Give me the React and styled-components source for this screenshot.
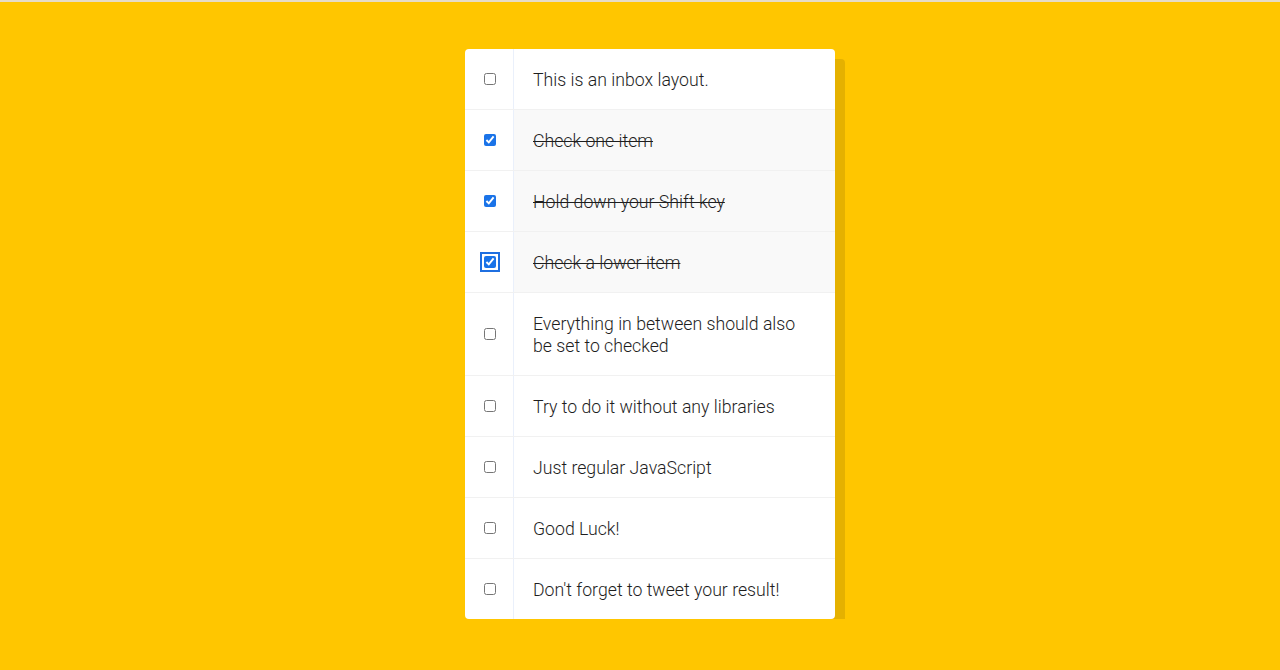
import React, { useState } from "react";
import styled, { createGlobalStyle, css } from "styled-components";

const GlobalStyle = createGlobalStyle`
  html {
    background: #ffc600;
  }
  body {
    margin: 0;
    font-family: Roboto, "Liberation Sans", sans-serif;
  }
`;

const TopRule = styled.div`
  height: 2px;
  background: #e6dcc8;
`;

const Page = styled.div`
  display: flex;
  justify-content: center;
  padding: 47px 0 0 20px;
`;

const Inbox = styled.div`
  width: 370px;
  background: white;
  border-radius: 4px;
  box-shadow: 10px 10px 0 rgba(0, 0, 0, 0.1);
  overflow: hidden;
`;

const Item = styled.label`
  display: flex;
  align-items: stretch;
  border-bottom: 1px solid #f1f1f1;
  &:last-child {
    border-bottom: 0;
  }
`;

const CheckCell = styled.div`
  width: 48px;
  display: flex;
  align-items: center;
  justify-content: center;
  flex-shrink: 0;
`;

const Checkbox = styled.input`
  width: 12px;
  height: 12px;
  margin: 0 0 0 1px;
  accent-color: #1a73e8;
  ${(p) =>
    p.$focused &&
    css`
      border-radius: 3px;
      box-shadow: 0 0 0 2px #ffffff, 0 0 0 4px #1f6fe0;
    `}
`;

const Text = styled.p`
  margin: 0;
  flex: 1;
  padding: 20px 18px 18px 19px;
  border-left: 1px solid #eaf0fb;
  font-family: Roboto, "Liberation Sans", sans-serif;
  font-size: 17.7px;
  font-weight: 300;
  line-height: 22px;
  color: #1e1e1e;
  ${(p) =>
    p.$checked &&
    css`
      background: #f9f9f9;
      text-decoration: line-through;
    `}
`;

const initialItems = [
  { text: "This is an inbox layout.", checked: false },
  { text: "Check one item", checked: true },
  { text: "Hold down your Shift key", checked: true },
  { text: "Check a lower item", checked: true, focused: true },
  { text: "Everything in between should also be set to checked", checked: false },
  { text: "Try to do it without any libraries", checked: false },
  { text: "Just regular JavaScript", checked: false },
  { text: "Good Luck!", checked: false },
  { text: "Don't forget to tweet your result!", checked: false },
];

export default function App() {
  const [items, setItems] = useState(initialItems);

  const toggle = (index) => {
    setItems((prev) =>
      prev.map((item, i) => (i === index ? { ...item, checked: !item.checked } : item))
    );
  };

  return (
    <>
      <GlobalStyle />
      <TopRule />
      <Page>
        <Inbox>
          {items.map((item, i) => (
            <Item key={item.text}>
              <CheckCell>
                <Checkbox
                  type="checkbox"
                  checked={item.checked}
                  $focused={item.focused}
                  onChange={() => toggle(i)}
                />
              </CheckCell>
              <Text $checked={item.checked}>{item.text}</Text>
            </Item>
          ))}
        </Inbox>
      </Page>
    </>
  );
}
